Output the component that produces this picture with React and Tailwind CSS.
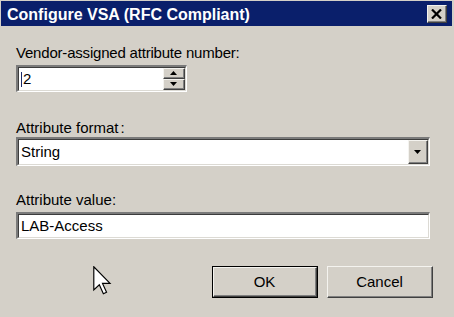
import React from "react";

const font = { fontFamily: '"Liberation Sans", Arial, sans-serif' };

function Sunken({ className, children }) {
  return (
    <div className={`border-t-2 border-l-2 border-t-[#7a7a7a] border-l-[#7a7a7a] border-b border-r border-b-white border-r-white ${className}`}>
      <div className="h-full border-t border-l border-t-[#3c3c3c] border-l-[#3c3c3c] border-b border-r border-b-[#dcdad4] border-r-[#dcdad4] bg-white flex items-center">
        {children}
      </div>
    </div>
  );
}

function Raised({ className, children }) {
  return (
    <div className={`border-t border-l border-t-[#f4f3ef] border-l-[#f4f3ef] border-b border-r border-b-[#404040] border-r-[#404040] bg-[#d4d0c8] ${className}`}>
      <div className="h-full w-full border-b border-r border-b-[#808080] border-r-[#808080] flex items-center justify-center">
        {children}
      </div>
    </div>
  );
}

function Tri({ up }) {
  return (
    <svg width="7" height="4" viewBox="0 0 7 4">
      {up ? <path d="M0 4 L7 4 L3.5 0 Z" fill="#000" /> : <path d="M0 0 L7 0 L3.5 4 Z" fill="#000" />}
    </svg>
  );
}

export default function App() {
  return (
    <div className="relative w-[454px] h-[317px] bg-[#d4d0c8] overflow-hidden text-black" style={font}>
      {/* title bar */}
      <div className="ml-[1px] mt-[1px] w-[451px] h-[25px] bg-[#0a1f6b] flex items-start justify-between pl-[6px] pr-[5px]">
        <span className="mt-[5px] text-[16px] leading-[18px] font-bold text-white whitespace-nowrap">
          Configure VSA (RFC Compliant)
        </span>
        <Raised className="mt-[4px] w-[20px] h-[18px]">
          <svg width="11" height="10" viewBox="0 0 11 10">
            <path d="M1 0.5 L10 9.5 M10 0.5 L1 9.5" stroke="#000" strokeWidth="2.2" />
          </svg>
        </Raised>
      </div>

      <div className="flex flex-col pl-[16px]">
        <div className="mt-[18px] text-[15px] leading-[18px] whitespace-nowrap tracking-[-0.2px]">
          Vendor-assigned attribute number:
        </div>
        <Sunken className="mt-[3px] w-[171px] h-[27px]">
          <div className="flex-1 flex items-center pl-[2px] text-[15px] leading-[18px]">
            <span className="w-[1px] h-[15px] bg-[#1a2a6a] mr-[1px]" />
            <span>2</span>
          </div>
          <div className="w-[22px] h-full flex flex-col">
            <Raised className="flex-1 w-full">
              <Tri up />
            </Raised>
            <Raised className="flex-1 w-full">
              <Tri />
            </Raised>
          </div>
        </Sunken>

        <div className="mt-[27px] text-[15px] leading-[18px] whitespace-nowrap">
          Attribute format<span className="ml-[2px]">:</span>
        </div>
        <Sunken className="w-[414px] h-[29px]">
          <div className="flex-1 pl-[2px] text-[15px] leading-[18px]">String</div>
          <Raised className="w-[20px] h-full">
            <Tri />
          </Raised>
        </Sunken>

        <div className="mt-[25px] text-[15px] leading-[18px] whitespace-nowrap">Attribute value:</div>
        <Sunken className="mt-[3px] w-[414px] h-[27px]">
          <div className="flex-1 pl-[2px] text-[15px] leading-[18px]">LAB-Access</div>
        </Sunken>

        <div className="mt-[27px] flex justify-end pr-[21px] gap-[9px]">
          <div className="w-[106px] h-[32px] border border-black">
            <Raised className="w-full h-full">
              <span className="text-[15px] leading-[18px]">OK</span>
            </Raised>
          </div>
          <Raised className="w-[106px] h-[32px]">
            <span className="text-[15px] leading-[18px]">Cancel</span>
          </Raised>
        </div>
      </div>

      {/* mouse pointer */}
      <svg className="absolute left-[93px] top-[266px]" width="19" height="29" viewBox="-0.5 -0.5 13 20">
        <path d="M0 0 L0 16 L3.8 12.4 L6.6 18.6 L8.8 17.6 L6 11.5 L11.2 11.5 Z" fill="#fff" stroke="#000" strokeWidth="0.8" strokeLinejoin="miter" />
      </svg>
    </div>
  );
}
